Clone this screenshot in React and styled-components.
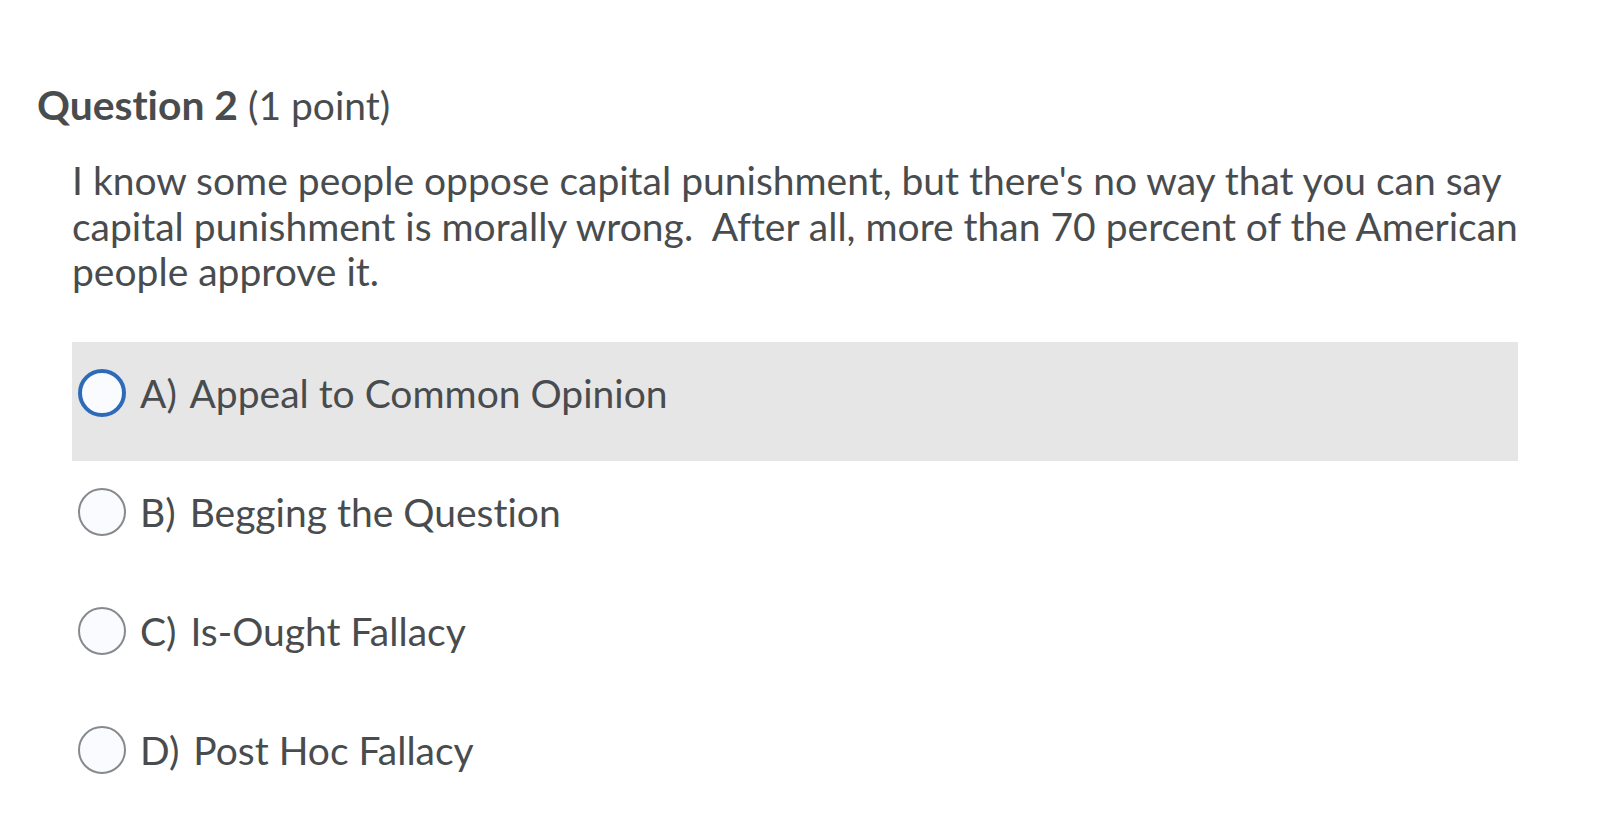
import React from "react";
import styled, { createGlobalStyle } from "styled-components";

const Global = createGlobalStyle`
  html, body { margin: 0; padding: 0; background: #ffffff; }
  body {
    font-family: Lato, "Open Sans", sans-serif;
    color: #494c4e;
    font-variant-ligatures: no-common-ligatures;
  }
  * { box-sizing: border-box; }
`;

const Page = styled.main`
  width: 1602px;
  height: 840px;
  padding: 83px 0 0 37px;
  overflow: hidden;
`;

const Title = styled.h2`
  margin: 0;
  font-size: 39px;
  line-height: 44px;
  font-weight: 400;
  color: #494c4e;
  & > strong { font-weight: 700; font-size: 40.8px; }
`;

const Body = styled.div`
  padding: 31px 0 0 35px;
  width: 1500px;
`;

const Prompt = styled.p`
  margin: 0;
  font-size: 39px;
  line-height: 45.6px;
  color: #494c4e;
`;

const Options = styled.div`
  margin-top: 47px;
  display: flex;
  flex-direction: column;
  width: 1446px;
`;

const Option = styled.label`
  display: flex;
  align-items: flex-start;
  gap: 14px;
  height: 119px;
  padding: 27px 0 0 6px;
  background: ${(p) => (p.$active ? "#e6e6e6" : "transparent")};
  cursor: pointer;
`;

const Radio = styled.span`
  flex: none;
  width: 48px;
  height: 48px;
  border-radius: 50%;
  background: #f9fbff;
  border: ${(p) => (p.$focus ? "4px solid #2d6bb8" : "2px solid #878a8c")};
`;

const OptionText = styled.span`
  font-size: 39px;
  line-height: 48px;
  color: #494c4e;
`;

const Letter = styled.span`
  padding-right: 4px;
`;

const options = [
  ["A)", "Appeal to Common Opinion"],
  ["B)", "Begging the Question"],
  ["C)", "Is-Ought Fallacy"],
  ["D)", "Post Hoc Fallacy"],
];

export default function App() {
  return (
    <>
      <Global />
      <Page>
        <Title>
          <strong>Question 2</strong> (1 point)
        </Title>
        <Body>
          <Prompt>
            I know some people oppose capital punishment, but there's no way that you can say
            capital punishment is morally wrong.&nbsp; After all, more than 70 percent of the
            American people approve it.
          </Prompt>
          <Options>
            {options.map(([l, t], i) => (
              <Option key={l} $active={i === 0}>
                <Radio $focus={i === 0} />
                <OptionText>
                  <Letter>{l}</Letter> {t}
                </OptionText>
              </Option>
            ))}
          </Options>
        </Body>
      </Page>
    </>
  );
}
